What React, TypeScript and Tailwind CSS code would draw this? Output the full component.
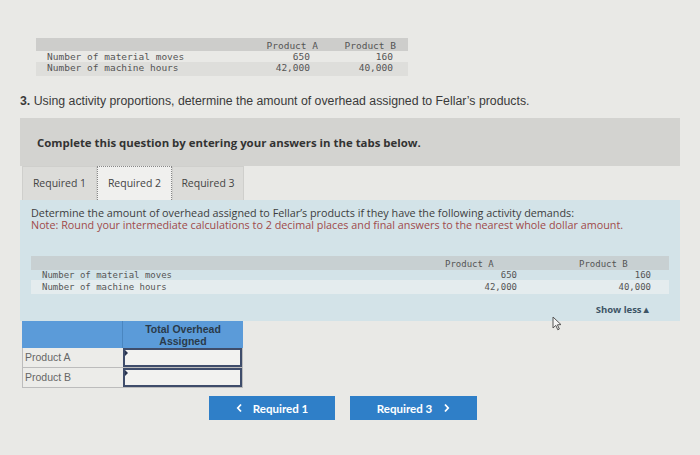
import React from "react";

const mono = { fontFamily: '"DejaVu Sans Mono", "Liberation Mono", monospace' };

function Cursor() {
  return (
    <svg className="absolute left-[552px] top-[316px]" width="10" height="15" viewBox="0 0 10 15">
      <path d="M1 1 L1 12 L3.8 9.4 L5.8 13.8 L7.4 13 L5.4 8.8 L9 8.6 Z" fill="#f4f4f4" stroke="#555" strokeWidth="1" strokeLinejoin="round" />
    </svg>
  );
}

function Chevron({ dir }: { dir: "left" | "right" }) {
  return (
    <svg width="7" height="10" viewBox="0 0 7 10">
      <path d={dir === "left" ? "M5 1.5 L1.8 5 L5 8.5" : "M2 1.5 L5.2 5 L2 8.5"} fill="none" stroke="white" strokeWidth="1.8" />
    </svg>
  );
}

function InputCell() {
  return (
    <div className="relative flex-1 border-2 border-[#3f4d6b] bg-[#f2f2f0]">
      <span className="absolute left-0 top-0 w-0 h-0 border-t-[3px] border-b-[3px] border-l-[3px] border-t-transparent border-b-transparent border-l-[#2a3550]" />
    </div>
  );
}

export default function App() {
  return (
    <div className="relative w-[700px] h-[455px] overflow-hidden bg-[#e9e9e6] text-[#333]" style={{ fontFamily: '"Liberation Sans", Arial, sans-serif' }}>
      {/* top data table */}
      <div className="pt-[38px] pl-[36px]">
        <div className="w-[372px] text-[9.5px] leading-[11px] text-[#555]" style={mono}>
          <div className="flex items-end h-[13px] bg-[#cdcdcb]">
            <div className="w-[226px]" />
            <div className="w-[56px] text-right">Product A</div>
            <div className="w-[78px] text-right">Product B</div>
          </div>
          <div className="flex">
            <div className="w-[226px] pl-[11px]">Number of material moves</div>
            <div className="w-[48px] text-right">650</div>
            <div className="w-[83px] text-right">160</div>
          </div>
          <div className="flex bg-[#dededb] pb-[3px]">
            <div className="w-[226px] pl-[11px]">Number of machine hours</div>
            <div className="w-[48px] text-right">42,000</div>
            <div className="w-[83px] text-right">40,000</div>
          </div>
        </div>
      </div>

      <p className="mt-[16px] ml-[20px] text-[12.3px] text-[#3a3a3a]">
        <span className="font-bold">3.</span> Using activity proportions, determine the amount of overhead assigned to Fellar’s products.
      </p>

      <div className="mx-[20px] mt-[8px] h-[48px] bg-[#d3d3d0] pt-[12px] pl-[17px]">
        <span className="text-[11.4px] font-bold text-[#333]" style={{ fontFamily: '"Open Sans", Lato, sans-serif' }}>
          Complete this question by entering your answers in the tabs below.
        </span>
      </div>

      {/* tabs */}
      <div className="flex mx-[20px] pl-[2px] text-[10.5px] text-[#444]" style={{ fontFamily: '"Open Sans", sans-serif' }}>
        <div className="w-[75px] h-[34px] flex items-center justify-center bg-[#dcdcd9] border border-[#cfcfcc] border-b-0">Required 1</div>
        <div className="w-[75px] h-[34px] flex items-center justify-center bg-[#f0f0ee] border border-dotted border-[#888] border-b-0">Required 2</div>
        <div className="w-[72px] h-[34px] flex items-center justify-center bg-[#dcdcd9] border border-[#cfcfcc] border-b-0">Required 3</div>
      </div>

      {/* blue panel */}
      <div className="mx-[20px] w-[660px] h-[121px] bg-[#d3e3e8] pt-[7px] px-[11px]" style={{ fontFamily: '"Open Sans", sans-serif' }}>
        <p className="text-[10.8px] leading-[12px] text-[#3d3d3d]">
          Determine the amount of overhead assigned to Fellar’s products if they have the following activity demands:
          <br />
          <span className="text-[#a04a4a]">
            Note: Round your intermediate calculations to 2 decimal places and final answers to the nearest whole dollar amount.
          </span>
        </p>

        <div className="mt-[25px] w-[638px] text-[9px] leading-[11px] text-[#555]" style={mono}>
          <div className="flex items-end h-[14px] bg-[#c8d0d2]">
            <div className="w-[414px]" />
            <div className="w-[134px]">Product A</div>
            <div className="w-[60px]">Product B</div>
          </div>
          <div className="flex h-[10px]">
            <div className="w-[300px] pl-[11px]">Number of material moves</div>
            <div className="w-[186px] text-right">650</div>
            <div className="w-[134px] text-right">160</div>
          </div>
          <div className="flex bg-[#e4ecee] h-[14px] pt-[2px]">
            <div className="w-[300px] pl-[11px]">Number of machine hours</div>
            <div className="w-[186px] text-right">42,000</div>
            <div className="w-[134px] text-right">40,000</div>
          </div>
        </div>
        <div className="w-[620px] mt-[9px] flex justify-end">
          <span className="text-[9.5px] font-bold text-[#3e5566]">Show less▲</span>
        </div>
      </div>

      {/* answer table */}
      <div className="ml-[22px] w-[221px] text-[10.5px]">
        <div className="flex h-[27px] bg-[#5b9bd9]">
          <div className="w-[101px] border-r border-[#4a86c0]" />
          <div className="flex-1 text-center leading-[12px] pt-[2px] font-bold text-[#2a3a4a]">
            Total Overhead
            <br />
            Assigned
          </div>
        </div>
        <div className="flex h-[20px] border border-[#bcbcbc] border-t-0 bg-[#ecece9]">
          <div className="w-[100px] pl-[2px] flex items-center text-[#666]">Product A</div>
          <InputCell />
        </div>
        <div className="flex h-[20px] border border-[#bcbcbc] border-t-0 bg-[#ecece9]">
          <div className="w-[100px] pl-[2px] flex items-center text-[#666]">Product B</div>
          <InputCell />
        </div>
      </div>

      {/* nav buttons */}
      <div className="flex ml-[209px] mt-[8px] gap-[15px]" style={{ fontFamily: 'Lato, "Open Sans", sans-serif' }}>
        <button className="w-[126px] h-[24px] bg-[#2f7fc8] text-white text-[11.5px] font-bold flex items-center justify-center gap-[10px]">
          <Chevron dir="left" />
          <span>Required 1</span>
        </button>
        <button className="w-[127px] h-[24px] bg-[#2f7fc8] text-white text-[11.5px] font-bold flex items-center justify-center gap-[11px]">
          <span>Required 3</span>
          <Chevron dir="right" />
        </button>
      </div>

      <Cursor />
    </div>
  );
}
